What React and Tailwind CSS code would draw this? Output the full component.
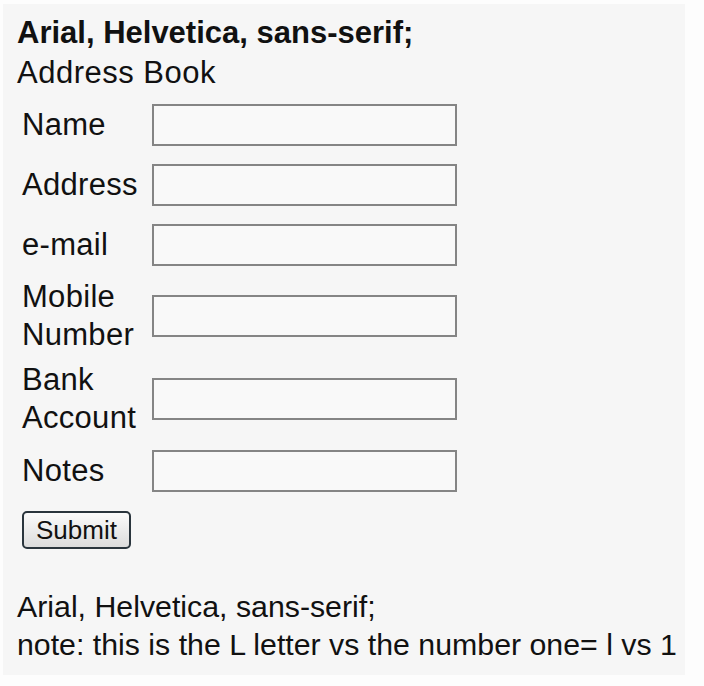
import React from 'react';

const FIELDS = [
  { id: 'name', label: ['Name'] },
  { id: 'address', label: ['Address'] },
  { id: 'email', label: ['e-mail'] },
  { id: 'mobile', label: ['Mobile', 'Number'] },
  { id: 'bank', label: ['Bank', 'Account'] },
  { id: 'notes', label: ['Notes'] }
];

const App = () => {
  return (
    <div className="min-h-[686px] bg-[#fdfdfd] pt-[4px] pl-[3px] font-['Liberation_Sans',Arial,sans-serif] text-[#111]">
      <div className="w-[682px] h-[671px] bg-[#f6f6f6] pl-[14px] pt-[9px]">
        <div className="font-bold text-[31px] leading-[40px]">Arial, Helvetica, sans-serif;</div>
        <div className="text-[31px] leading-[40px] tracking-[0.5px]">Address Book</div>

        {/* Address book form */}
        <form
          className="mt-[5px] grid grid-cols-[135px_305px] gap-y-[7px] items-center text-[31px] leading-[38px] tracking-[0.3px]"
          onSubmit={(e) => e.preventDefault()}
        >
          {FIELDS.map((field) => (
            <React.Fragment key={field.id}>
              <label htmlFor={field.id} className="pl-[5px]">
                {field.label.map((line) => (
                  <div key={line}>{line}</div>
                ))}
              </label>
              <input
                id={field.id}
                type="text"
                className="my-[5.5px] h-[42px] w-[305px] border-2 border-[#858585] bg-[#f9f9f9] outline-none"
              />
            </React.Fragment>
          ))}
          <div className="col-span-2 pl-[5px] pt-[5.5px]">
            <button
              type="submit"
              className="h-[38px] w-[109px] rounded-[5px] border-2 border-[#2a353d] bg-gradient-to-b from-[#fbfbfb] to-[#dcdcdc] text-[26px] leading-none tracking-normal text-[#111]"
            >
              Submit
            </button>
          </div>
        </form>

        <div className="mt-[39px] whitespace-nowrap text-[30.3px] leading-[38px]">
          <div>Arial, Helvetica, sans-serif;</div>
          <div>note: this is the L letter vs the number one= l vs 1</div>
        </div>
      </div>
    </div>
  );
};

export default App;
